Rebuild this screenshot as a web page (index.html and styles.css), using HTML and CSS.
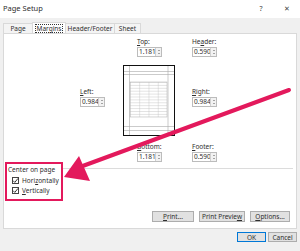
FILE: index.html
```html
<!DOCTYPE html>
<html lang="en">
<head>
    <meta charset="UTF-8">
    <title>Page Setup</title>
    <link rel="stylesheet" href="styles.css">
</head>
<body>
    <!-- Barra de titulo -->
    <div class="titlebar">
        <span class="title">Page Setup</span>
        <span class="ctl">?</span>
        <span class="ctl close">&#x2715;</span>
    </div>

    <!-- Pestanas -->
    <div class="tabs">
        <div class="tab w-page">Page</div>
        <div class="tab w-margins active"><span class="focus">Margins</span></div>
        <div class="tab w-header">Header/Footer</div>
        <div class="tab w-sheet">Sheet</div>
    </div>

    <div class="panel">
        <div class="margins">
            <div class="field f-top">
                <div class="lbl"><u>T</u>op:</div>
                <div class="spin"><span class="val">1.181</span><span class="arrows"><i class="up"></i><i class="down"></i></span></div>
            </div>
            <div class="field f-header">
                <div class="lbl">He<u>a</u>der:</div>
                <div class="spin"><span class="val">0.590</span><span class="arrows"><i class="up"></i><i class="down"></i></span></div>
            </div>

            <div class="field f-left">
                <div class="lbl"><u>L</u>eft:</div>
                <div class="spin"><span class="val">0.984</span><span class="arrows"><i class="up"></i><i class="down"></i></span></div>
            </div>
            <svg class="preview" width="52" height="71" viewBox="0 0 52 71">
                <defs>
                    <pattern id="cells" x="7" y="17" width="9.25" height="2.9" patternUnits="userSpaceOnUse">
                        <path d="M0 0.25H9.25M0.25 0V2.9" stroke="#b9b9b9" stroke-width="0.5" fill="none"/>
                    </pattern>
                </defs>
                <rect x="0.5" y="0.5" width="51" height="70" fill="#fff" stroke="#111"/>
                <path d="M6.5 1V70M45 1V70M1 6.5H51M1 9.5H51M1 61.5H51M1 65.5H51" stroke="#a8a8a8" stroke-width="0.6" fill="none"/>
                <rect x="7" y="17" width="37" height="35" fill="url(#cells)"/>
                <rect x="7" y="17" width="37" height="35" fill="none" stroke="#b0b0b0" stroke-width="0.5"/>
            </svg>
            <div class="field f-right">
                <div class="lbl"><u>R</u>ight:</div>
                <div class="spin"><span class="val">0.984</span><span class="arrows"><i class="up"></i><i class="down"></i></span></div>
            </div>

            <div class="field f-bottom">
                <div class="lbl"><u>B</u>ottom:</div>
                <div class="spin"><span class="val">1.181</span><span class="arrows"><i class="up"></i><i class="down"></i></span></div>
            </div>
            <div class="field f-footer">
                <div class="lbl"><u>F</u>ooter:</div>
                <div class="spin"><span class="val">0.590</span><span class="arrows"><i class="up"></i><i class="down"></i></span></div>
            </div>
        </div>

        <!-- Centrar en pagina -->
        <div class="center-row">
            <div class="center-group">
                <div class="group-title">Center on page</div>
                <div class="check">
                    <span class="box"><svg width="7" height="7" viewBox="0 0 7 7"><path d="M1 3.6L2.8 5.4L6 1.4" stroke="#222" stroke-width="0.9" fill="none"/></svg></span>
                    <span>Hori<u>z</u>ontally</span>
                </div>
                <div class="check">
                    <span class="box"><svg width="7" height="7" viewBox="0 0 7 7"><path d="M1 3.6L2.8 5.4L6 1.4" stroke="#222" stroke-width="0.9" fill="none"/></svg></span>
                    <span><u>V</u>ertically</span>
                </div>
            </div>
            <div class="rule"></div>
        </div>

        <div class="panel-buttons">
            <button class="btn w-print"><u>P</u>rint...</button>
            <button class="btn w-preview">Print Previe<u>w</u></button>
            <button class="btn w-options"><u>O</u>ptions...</button>
        </div>
    </div>

    <div class="dialog-buttons">
        <button class="btn btn-default w-ok">OK</button>
        <button class="btn w-ok">Cancel</button>
    </div>

    <!-- Flecha de anotacion -->
    <svg class="annotation" width="300" height="251" viewBox="0 0 300 251">
        <line x1="289" y1="90" x2="80" y2="167" stroke="#e3195c" stroke-width="4" stroke-linecap="round"/>
        <polygon points="64,177 90,181 79,156" fill="#e3195c"/>
    </svg>
</body>
</html>
```

FILE: styles.css
```css
* {
    box-sizing: border-box;
}
body {
    margin: 0;
    width: 300px;
    height: 251px;
    overflow: hidden;
    position: relative;
    font-family: "Noto Sans", "Open Sans", sans-serif;
    font-size: 7px;
    color: #2e2e2e;
    background-color: #f0f0f0;
}
u {
    text-decoration-thickness: 0.5px;
}
.titlebar {
    height: 18px;
    background-color: #ffffff;
    display: flex;
    align-items: center;
    padding-left: 3px;
}
.title {
    flex: 1;
    font-size: 7.5px;
    margin-top: -2px;
}
.ctl {
    width: 26px;
    text-align: center;
    font-size: 7px;
    color: #444;
    margin-top: -2px;
}
.tabs {
    display: flex;
    height: 10px;
    margin-top: 5px;
    padding-left: 3px;
    position: relative;
    z-index: 1;
}
.tab {
    height: 10px;
    line-height: 9px;
    text-align: center;
    background-color: #f4f4f4;
    border: 1px solid #d9d9d9;
    border-bottom: none;
    margin-right: -1px;
    font-size: 6.5px;
}
.tab.active {
    background-color: #ffffff;
    height: 11px;
    margin-top: -1px;
    padding-top: 1px;
}
.focus {
    display: inline-block;
    border: 1px dotted #333;
    line-height: 7px;
    padding: 0 1px;
}
.w-page { width: 30px; }
.w-margins { width: 34px; }
.w-header { width: 50px; }
.w-sheet { width: 27px; }
.panel {
    margin-left: 3px;
    width: 294px;
    height: 196px;
    background-color: #ffffff;
    border: 1px solid #d9d9d9;
    display: flex;
    flex-direction: column;
}
.margins {
    display: grid;
    grid-template-columns: 26px 52px 26px;
    column-gap: 17px;
    margin: 3px 0 0 76px;
}
.lbl {
    line-height: 9px;
    margin-bottom: 1px;
    font-size: 6.5px;
}
.spin {
    width: 25px;
    height: 10px;
    border: 1px solid #bcbcbc;
    display: flex;
    overflow: hidden;
    background-color: #fff;
}
.val {
    flex: 1;
    overflow: hidden;
    white-space: nowrap;
    line-height: 8px;
    padding-left: 1px;
    font-size: 6.5px;
}
.arrows {
    width: 6px;
    border-left: 1px solid #d0d0d0;
    background-color: #f2f2f2;
    display: flex;
    flex-direction: column;
    justify-content: space-evenly;
    align-items: center;
}
.arrows i {
    width: 0;
    height: 0;
    border-left: 1.5px solid transparent;
    border-right: 1.5px solid transparent;
}
.arrows .up {
    border-bottom: 1.5px solid #555;
}
.arrows .down {
    border-top: 1.5px solid #555;
}
.f-top {
    grid-column: 2;
    grid-row: 1;
    margin-left: 14px;
}
.f-header {
    grid-column: 3;
    grid-row: 1;
}
.f-left {
    grid-column: 1;
    grid-row: 2;
    align-self: center;
}
.preview {
    grid-column: 2;
    grid-row: 2;
    margin-top: 8px;
    display: block;
}
.f-right {
    grid-column: 3;
    grid-row: 2;
    align-self: center;
}
.f-bottom {
    grid-column: 2;
    grid-row: 3;
    margin: 6px 0 0 14px;
}
.f-footer {
    grid-column: 3;
    grid-row: 3;
    margin-top: 6px;
}
.center-row {
    display: flex;
}
.center-group {
    width: 58px;
    height: 39px;
    margin-left: 1px;
    border: 2px solid #e3195c;
    padding: 1px 0 0 1px;
}
.group-title {
    line-height: 10px;
    font-size: 6.5px;
}
.check {
    display: flex;
    align-items: center;
    height: 10px;
    margin-left: 4px;
    font-size: 6.5px;
}
.check .box {
    width: 7px;
    height: 7px;
    border: 1px solid #444;
    margin-right: 3px;
    display: flex;
}
.check .box svg {
    margin: -1px;
}
.rule {
    flex: 1;
    height: 1px;
    margin: 6px 3px 0 0;
    background-color: #dcdcdc;
}
.panel-buttons {
    display: flex;
    justify-content: flex-end;
    gap: 5px;
    margin-top: 10px;
    padding-right: 6px;
}
.btn {
    font-family: "Noto Sans", "Open Sans", sans-serif;
    font-size: 6.5px;
    color: #2e2e2e;
    height: 11px;
    line-height: 9px;
    padding: 0;
    background-color: #e1e1e1;
    border: 1px solid #adadad;
    border-radius: 0;
}
.btn-default {
    border-color: #0078d7;
}
.w-print { width: 42px; }
.w-preview { width: 46px; }
.w-options { width: 40px; }
.w-ok { width: 29px; height: 10px; }
.dialog-buttons {
    display: flex;
    justify-content: flex-end;
    gap: 2px;
    margin-top: 3px;
    padding-right: 3px;
}
.annotation {
    position: absolute;
    top: 0;
    left: 0;
    pointer-events: none;
}
```
